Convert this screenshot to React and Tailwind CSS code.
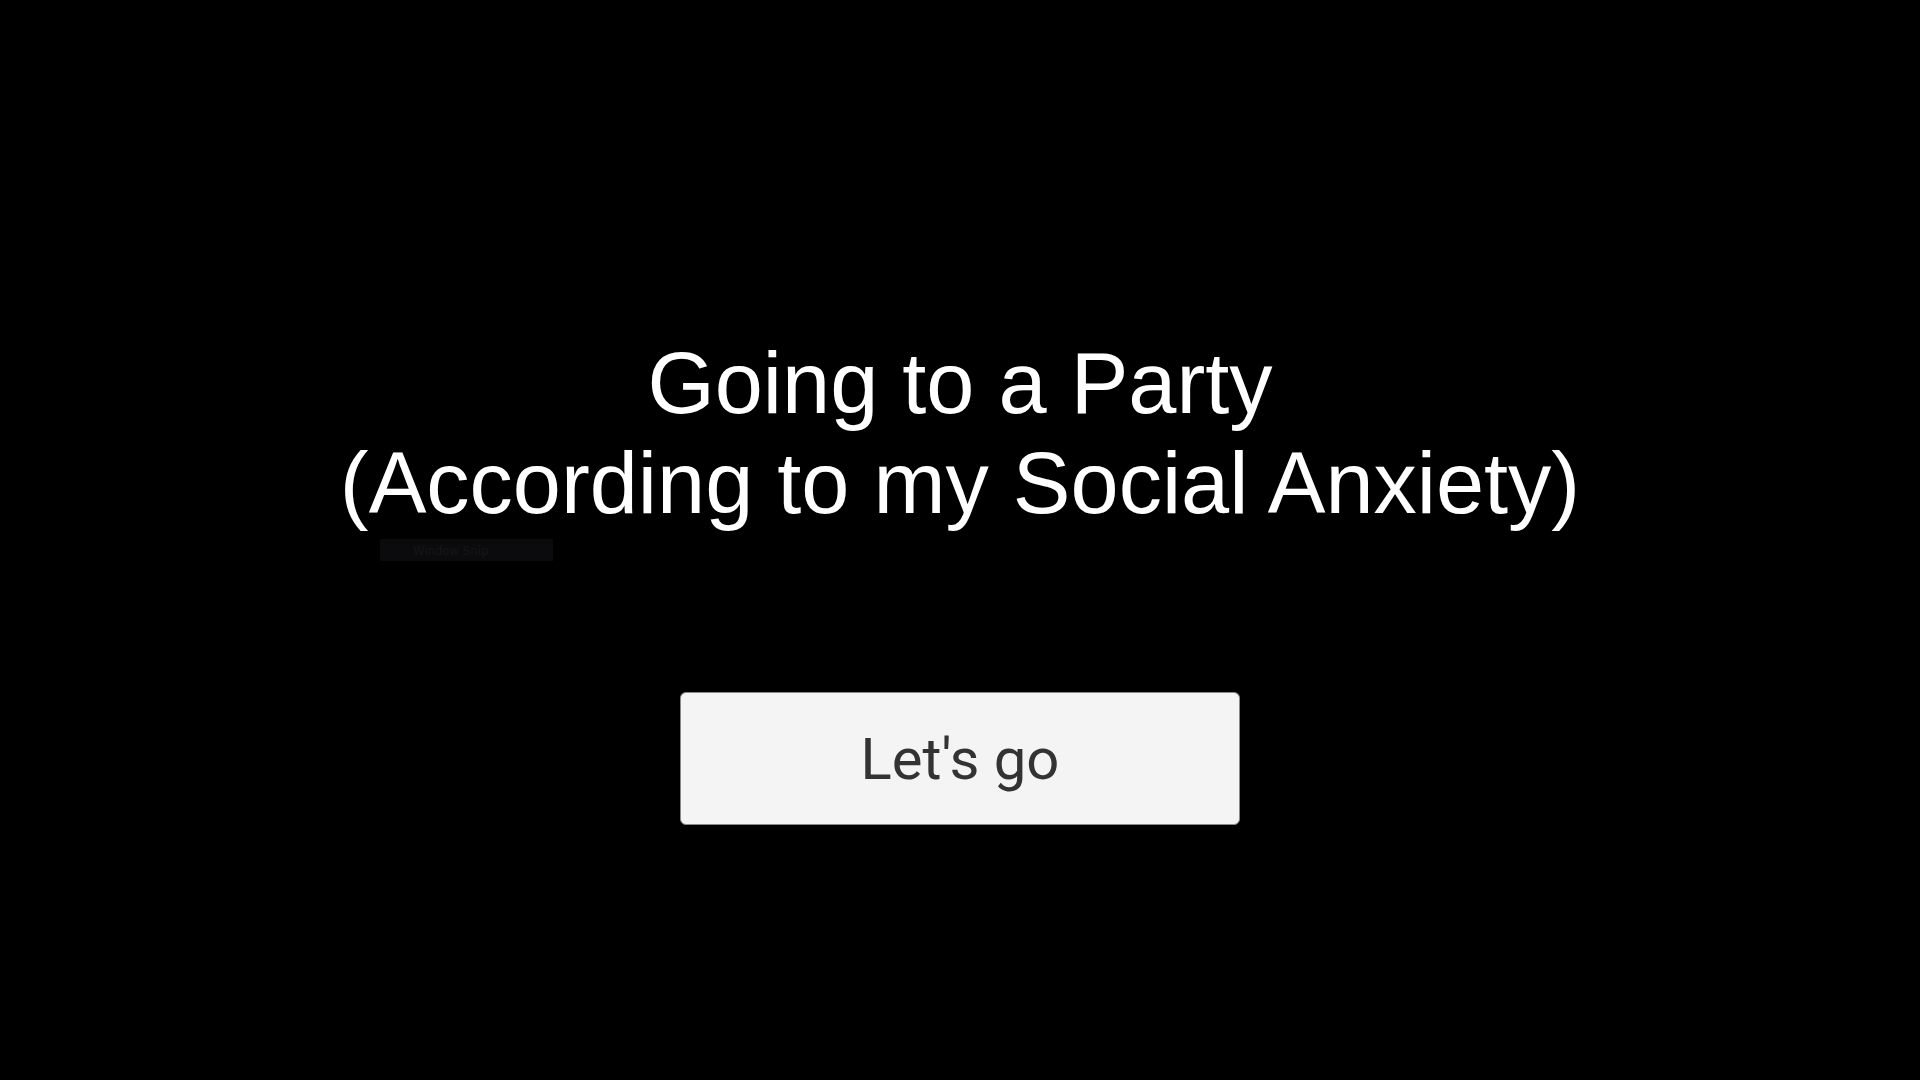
export default function App() {
  return (
    <div className="relative min-h-screen w-full bg-black flex flex-col items-center pt-[333px] font-['Liberation_Sans',Arial,sans-serif]">
      <h1 className="text-white text-center text-[86.5px] leading-[100px] font-normal">
        Going to a Party
        <br />
        (According to my Social Anxiety)
      </h1>

      {/* faint snip-tool label floating under the title */}
      <div className="absolute left-[380px] top-[539px] w-[173px] h-[22px] bg-[#0b0b0d] flex items-center pl-[33px]">
        <span className="text-[13px] leading-none text-[#161616] font-['DejaVu_Sans_Condensed',sans-serif]">
          Window Snip
        </span>
      </div>

      <button
        type="button"
        className="mt-[159px] w-[560px] h-[133px] bg-[#f4f4f4] border border-[#8a8a8a] rounded-[6px] text-[#333333] text-[58px] leading-none flex items-center justify-center font-['Roboto','Liberation_Sans',sans-serif]"
      >
        Let's go
      </button>
    </div>
  );
}
